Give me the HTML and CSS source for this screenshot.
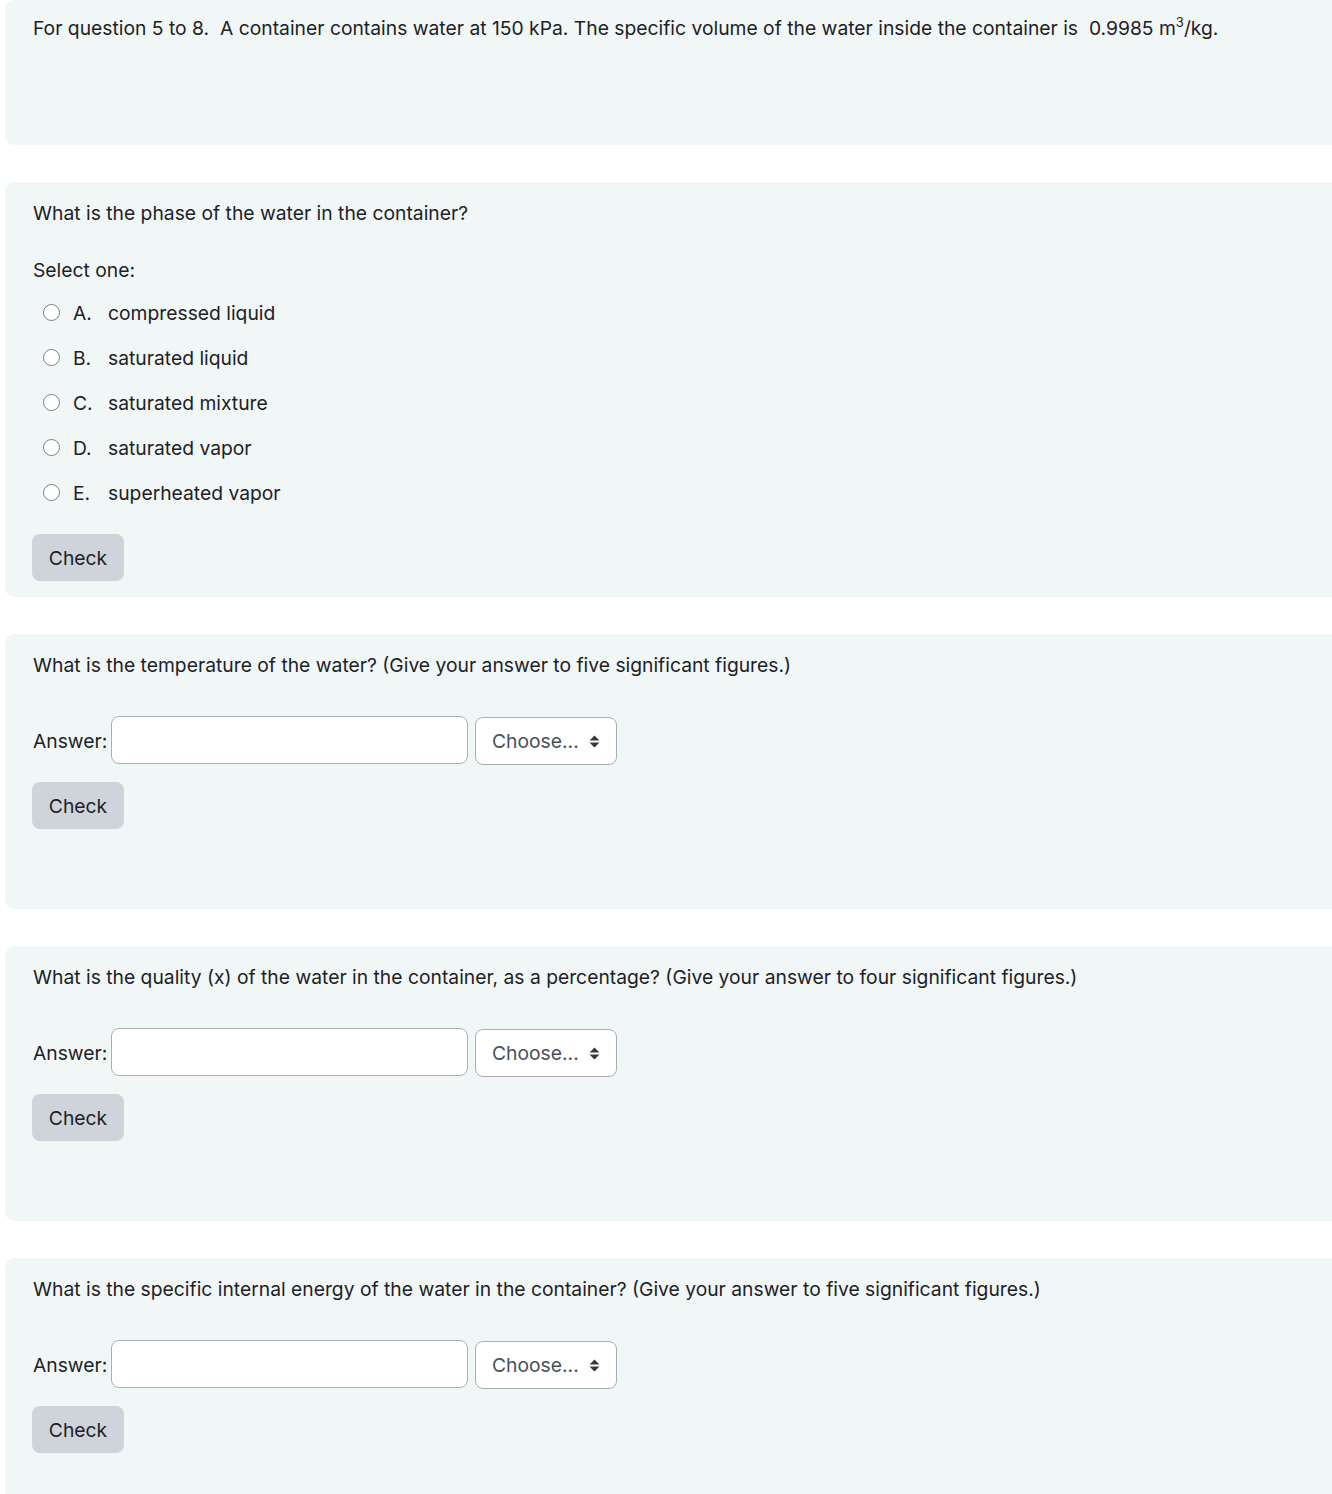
FILE: index.html
```html
<!DOCTYPE html>
<html>
<head>
<meta charset="utf-8">
<link rel="stylesheet" href="styles.css">
</head>
<body>
<div class="page">
  <section class="que info">
    <div class="qtext">For question 5 to 8.&nbsp; A container contains water at 150 kPa. The specific volume of the water inside the container is&nbsp; 0.9985 m<sup>3</sup>/kg.</div>
  </section>

  <section class="que mc">
    <div class="qtext">What is the phase of the water in the container?</div>
    <div class="prompt">Select one:</div>
    <div class="answers">
      <label class="opt"><span class="radio"></span><span class="num">A.</span><span class="txt">compressed liquid</span></label>
      <label class="opt"><span class="radio"></span><span class="num">B.</span><span class="txt">saturated liquid</span></label>
      <label class="opt"><span class="radio"></span><span class="num">C.</span><span class="txt">saturated mixture</span></label>
      <label class="opt"><span class="radio"></span><span class="num">D.</span><span class="txt">saturated vapor</span></label>
      <label class="opt"><span class="radio"></span><span class="num">E.</span><span class="txt">superheated vapor</span></label>
    </div>
    <div class="btnrow mc-btn"><span class="btn">Check</span></div>
  </section>

  <section class="que num-q">
    <div class="qtext">What is the temperature of the water? (Give your answer to five significant figures.)</div>
    <div class="ansrow">
      <span class="anslabel">Answer:</span>
      <span class="input"></span>
      <span class="select">Choose...<svg class="arrows" width="11" height="13" viewBox="0 0 11 13"><path d="M5.5 0.5 L10.5 5.6 L0.5 5.6 Z M5.5 12.5 L10.5 7.4 L0.5 7.4 Z" fill="#343a40"/></svg></span>
    </div>
    <div class="btnrow"><span class="btn">Check</span></div>
  </section>

  <section class="que num-q">
    <div class="qtext">What is the quality (x) of the water in the container, as a percentage? (Give your answer to four significant figures.)</div>
    <div class="ansrow">
      <span class="anslabel">Answer:</span>
      <span class="input"></span>
      <span class="select">Choose...<svg class="arrows" width="11" height="13" viewBox="0 0 11 13"><path d="M5.5 0.5 L10.5 5.6 L0.5 5.6 Z M5.5 12.5 L10.5 7.4 L0.5 7.4 Z" fill="#343a40"/></svg></span>
    </div>
    <div class="btnrow"><span class="btn">Check</span></div>
  </section>

  <section class="que num-q">
    <div class="qtext">What is the specific internal energy of the water in the container? (Give your answer to five significant figures.)</div>
    <div class="ansrow">
      <span class="anslabel">Answer:</span>
      <span class="input"></span>
      <span class="select">Choose...<svg class="arrows" width="11" height="13" viewBox="0 0 11 13"><path d="M5.5 0.5 L10.5 5.6 L0.5 5.6 Z M5.5 12.5 L10.5 7.4 L0.5 7.4 Z" fill="#343a40"/></svg></span>
    </div>
    <div class="btnrow"><span class="btn">Check</span></div>
  </section>
</div>
</body>
</html>
```

FILE: styles.css
```css
html, body {
  margin: 0;
  padding: 0;
  background: #ffffff;
  overflow: hidden;
}
body {
  font-family: Inter, "Liberation Sans", Arial, sans-serif;
  font-size: 19.3px;
  color: #1d2125;
}
.page {
  padding-left: 5px;
  margin-right: -20px;
}
.que {
  background: #f1f7f7;
  border-radius: 9px;
  padding: 17px 28px 0 28px;
  margin-bottom: 37px;
  box-sizing: border-box;
}
.qtext {
  line-height: 28px;
  white-space: nowrap;
}
.qtext sup {
  font-size: 13px;
  line-height: 0;
  vertical-align: 8px;
}
.info {
  height: 145px;
  padding-top: 14px;
}
.mc {
  padding-bottom: 16px;
}
.prompt {
  margin-top: 29px;
  margin-bottom: 6px;
  line-height: 28px;
}
.answers {
  display: flex;
  flex-direction: column;
  padding-left: 10px;
}
.opt {
  display: flex;
  align-items: center;
  height: 45px;
}
.radio {
  width: 17px;
  height: 17px;
  border: 1.5px solid #7a7e83;
  border-radius: 50%;
  background: #ffffff;
  box-sizing: border-box;
  margin-right: 13px;
  flex: none;
}
.num {
  width: 35px;
  flex: none;
}
.btnrow {
  display: flex;
  margin-top: 17px;
}
.mc-btn {
  margin-top: 19px;
}
.btn {
  display: flex;
  align-items: center;
  justify-content: center;
  width: 92px;
  height: 47px;
  margin-left: -1px;
  background: #ced4da;
  border-radius: 8px;
  box-sizing: border-box;
}
.num-q {
  height: 275px;
}
.ansrow {
  display: flex;
  align-items: center;
  margin-top: 37px;
  height: 49px;
}
.anslabel {
  width: 78px;
  flex: none;
}
.input {
  width: 357px;
  height: 48px;
  background: #ffffff;
  border: 1px solid #a9aeb4;
  border-radius: 8px;
  box-sizing: border-box;
  align-self: flex-start;
}
.select {
  display: flex;
  align-items: center;
  margin-left: 7px;
  width: 142px;
  height: 48px;
  background: #ffffff;
  border: 1px solid #a9aeb4;
  border-radius: 8px;
  box-sizing: border-box;
  padding-left: 16px;
  color: #495057;
  align-self: flex-end;
  position: relative;
}
.arrows {
  position: absolute;
  right: 16px;
  top: 17px;
}
```
